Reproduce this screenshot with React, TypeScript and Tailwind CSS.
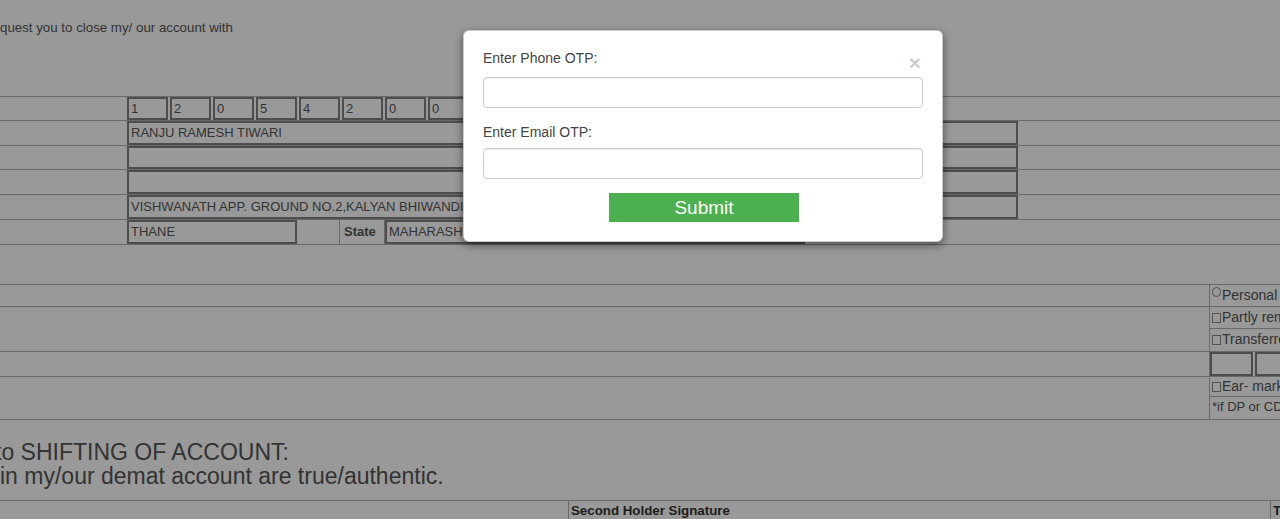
import React from "react";

const digits = ["1", "2", "0", "5", "4", "2", "0", "0", "0", "0", "1", "2", "3", "4", "5", "6"];

const Box = ({ className = "", children }: { className?: string; children?: React.ReactNode }) => (
  <div className={`h-full shrink-0 border-2 border-[#808080] pl-[2px] text-[13px] leading-[19px] ${className}`}>
    {children}
  </div>
);

const Check = ({ round }: { round?: boolean }) => (
  <span
    className={`mr-[1px] inline-block h-[10px] w-[9px] border border-[#8a8a8a] align-[-1px] ${
      round ? "rounded-full align-[3px]" : ""
    }`}
  ></span>
);

export default function App() {
  return (
    <div className="relative h-[519px] w-full overflow-hidden bg-white font-['Liberation_Sans',Arial,sans-serif] text-[#555]">
      <div className="w-[1400px]">
        <p className="pt-[20px] text-[13.3px] leading-[16px]">quest you to close my/ our account with</p>

        {/* holder details */}
        <div className="mt-[60px] border-b border-[#b0b0b0]">
          <div className="flex h-[24px] border-t border-[#b0b0b0]">
            <div className="w-[127px] shrink-0"></div>
            {digits.map((d, i) => (
              <Box key={i} className="mr-[2px] w-[41px]">
                {d}
              </Box>
            ))}
          </div>
          <div className="flex h-[25px] border-t border-[#b0b0b0]">
            <div className="w-[127px] shrink-0"></div>
            <Box className="w-[891px]">RANJU RAMESH TIWARI</Box>
          </div>
          <div className="flex h-[24px] border-t border-[#b0b0b0]">
            <div className="w-[127px] shrink-0"></div>
            <Box className="w-[891px]"></Box>
          </div>
          <div className="flex h-[25px] border-t border-[#b0b0b0]">
            <div className="w-[127px] shrink-0"></div>
            <Box className="w-[891px]"></Box>
          </div>
          <div className="flex h-[25px] border-t border-[#b0b0b0]">
            <div className="w-[127px] shrink-0"></div>
            <Box className="w-[891px]">VISHWANATH APP. GROUND NO.2,KALYAN BHIWANDI ROAD</Box>
          </div>
          <div className="flex h-[25px] border-t border-[#b0b0b0]">
            <div className="w-[127px] shrink-0"></div>
            <Box className="w-[170px]">THANE</Box>
            <div className="w-[43px] shrink-0 border-r border-[#b0b0b0]"></div>
            <div className="w-[45px] shrink-0 border-r border-[#b0b0b0] pl-[4px] text-[13px] font-bold leading-[23px]">
              State
            </div>
            <Box className="w-[420px]">MAHARASHTRA</Box>
          </div>
        </div>

        {/* closure reasons */}
        <div className="mt-[39px] flex border-b border-[#b0b0b0]">
          <div className="w-[1209px] shrink-0">
            <div className="h-[22px] border-t border-[#b0b0b0]"></div>
            <div className="h-[45px] border-t border-[#b0b0b0]"></div>
            <div className="h-[25px] border-t border-[#b0b0b0]"></div>
            <div className="h-[43px] border-t border-[#b0b0b0]"></div>
          </div>
          <div className="w-[190px] shrink-0 border-l border-[#b0b0b0] text-[14px] leading-[20px]">
            <div className="h-[22px] border-t border-[#b0b0b0] pl-[2px]">
              <Check round />
              Personal reasons
            </div>
            <div className="h-[22px] border-t border-[#b0b0b0] pl-[2px]">
              <Check />
              Partly remaining
            </div>
            <div className="h-[23px] border-t border-[#b0b0b0] pl-[2px]">
              <Check />
              Transferred to
            </div>
            <div className="flex h-[25px] border-t border-[#b0b0b0]">
              <Box className="mr-[2px] w-[43px]"></Box>
              <Box className="w-[43px]"></Box>
            </div>
            <div className="h-[20px] border-t border-[#b0b0b0] pl-[2px] leading-[18px]">
              <Check />
              Ear- marked
            </div>
            <div className="h-[23px] border-t border-[#b0b0b0] pl-[2px] text-[13px]">*if DP or CDSL</div>
          </div>
        </div>

        <div className="mt-[20px] text-[23px] leading-[24px]">
          <p className="-ml-[5px]">to SHIFTING OF ACCOUNT:</p>
          <p>in my/our demat account are true/authentic.</p>
        </div>

        {/* signatures */}
        <div className="mt-[12px] flex h-[30px] border-t border-[#b0b0b0] text-[13.3px] font-bold leading-[15px] text-[#333]">
          <div className="w-[568px] shrink-0"></div>
          <div className="w-[702px] shrink-0 border-l border-[#b0b0b0] pl-[2px] pt-[2px]">Second Holder Signature</div>
          <div className="w-[200px] shrink-0 border-l border-[#b0b0b0] pl-[2px] pt-[2px]">Third Holder Signature</div>
        </div>
      </div>

      {/* overlay */}
      <div className="absolute inset-0 bg-black/40"></div>

      {/* OTP modal */}
      <div className="absolute left-[463px] top-[30px] w-[480px] rounded-[6px] border border-black/20 bg-white px-[19px] pb-[19px] pt-[17px] shadow-[0_3px_9px_rgba(0,0,0,0.5)]">
        <button className="absolute right-[21px] top-[21px] text-[21px] font-bold leading-none text-black opacity-20">
          ×
        </button>
        <label className="block h-5 text-[14px] leading-5 text-[#444]">Enter Phone OTP:</label>
        <input className="mt-[9px] block h-[31px] w-full rounded border border-[#ccc] shadow-[inset_0_1px_1px_rgba(0,0,0,0.075)]" />
        <label className="mt-[14px] block h-5 text-[14px] leading-5 text-[#444]">Enter Email OTP:</label>
        <input className="mt-[6px] block h-[31px] w-full rounded border border-[#ccc] shadow-[inset_0_1px_1px_rgba(0,0,0,0.075)]" />
        <button className="mx-auto mt-[14px] block h-[29px] w-[190px] translate-x-[1px] bg-[#4caf50] text-[19px] leading-[29px] text-white">
          Submit
        </button>
      </div>
    </div>
  );
}
